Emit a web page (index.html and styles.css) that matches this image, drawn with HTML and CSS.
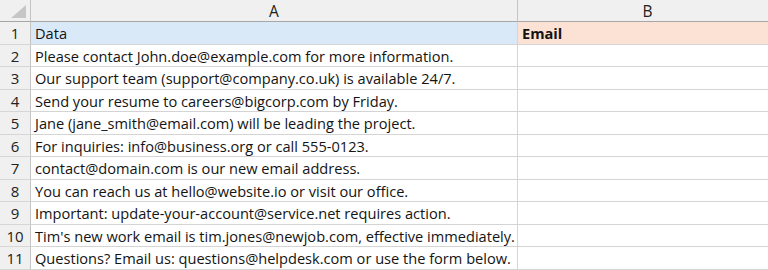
FILE: index.html
```html
<!DOCTYPE html>
<html>
<head>
<meta charset="utf-8">
<link rel="stylesheet" href="styles.css">
</head>
<body>
<div class="sheet">
  <div class="row head">
    <div class="rh corner"><svg class="tri" width="15" height="13" viewBox="0 0 15 13"><polygon points="15,0 15,13 0,13" fill="#c6c6c6"/></svg></div>
    <div class="c a colh">A</div>
    <div class="c b colh">B</div>
  </div>
  <div class="row"><div class="rh">1</div><div class="c a hdr-a">Data</div><div class="c b hdr-b">Email</div></div>
  <div class="row"><div class="rh">2</div><div class="c a">Please contact John.doe@example.com for more information.</div><div class="c b"></div></div>
  <div class="row"><div class="rh">3</div><div class="c a">Our support team (support@company.co.uk) is available 24/7.</div><div class="c b"></div></div>
  <div class="row"><div class="rh">4</div><div class="c a">Send your resume to careers@bigcorp.com by Friday.</div><div class="c b"></div></div>
  <div class="row"><div class="rh">5</div><div class="c a">Jane (jane_smith@email.com) will be leading the project.</div><div class="c b"></div></div>
  <div class="row"><div class="rh">6</div><div class="c a">For inquiries: info@business.org or call 555-0123.</div><div class="c b"></div></div>
  <div class="row"><div class="rh">7</div><div class="c a">contact@domain.com is our new email address.</div><div class="c b"></div></div>
  <div class="row"><div class="rh">8</div><div class="c a">You can reach us at hello@website.io or visit our office.</div><div class="c b"></div></div>
  <div class="row"><div class="rh">9</div><div class="c a">Important: update-your-account@service.net requires action.</div><div class="c b"></div></div>
  <div class="row"><div class="rh">10</div><div class="c a">Tim's new work email is tim.jones@newjob.com, effective immediately.</div><div class="c b"></div></div>
  <div class="row"><div class="rh">11</div><div class="c a">Questions? Email us: questions@helpdesk.com or use the form below.</div><div class="c b"></div></div>
</div>
</body>
</html>
```
FILE: styles.css
```css
html, body {
  margin: 0;
  padding: 0;
  background: #ffffff;
}
body {
  font-family: "Open Sans", "Noto Sans", sans-serif;
  font-size: 14.6px;
  color: #141414;
  overflow: hidden;
}
.sheet {
  display: flex;
  flex-direction: column;
  width: 768px;
}
.row {
  display: grid;
  grid-template-columns: 31px 487px 260px;
  height: 22.5px;
  box-sizing: border-box;
}
.row.head {
  height: 22px;
  background: #f0f0f0;
}
.rh {
  background: #f0f0f0;
  border-right: 1px solid #c4c4c4;
  border-bottom: 1px solid #d6d6d6;
  display: flex;
  align-items: center;
  justify-content: center;
  padding-top: 1px;
  color: #222;
  font-size: 15px;
  box-sizing: border-box;
}
.corner {
  position: relative;
  border-bottom: 1px solid #a6a6a6;
  align-items: flex-end;
  justify-content: flex-end;
  padding: 0 4px 3px 0;
}
.c {
  border-right: 1px solid #d4d4d4;
  border-bottom: 1px solid #d4d4d4;
  display: flex;
  align-items: center;
  padding-left: 4px;
  padding-top: 1px;
  white-space: nowrap;
  overflow: hidden;
  box-sizing: border-box;
}
.colh {
  justify-content: center;
  padding-left: 0;
  border-right: 1px solid #c4c4c4;
  border-bottom: 1px solid #a6a6a6;
  font-size: 15.5px;
  color: #222;
}
.hdr-a {
  background: #dae9f8;
}
.hdr-b {
  background: #fbe2d5;
  font-weight: bold;
}
```
